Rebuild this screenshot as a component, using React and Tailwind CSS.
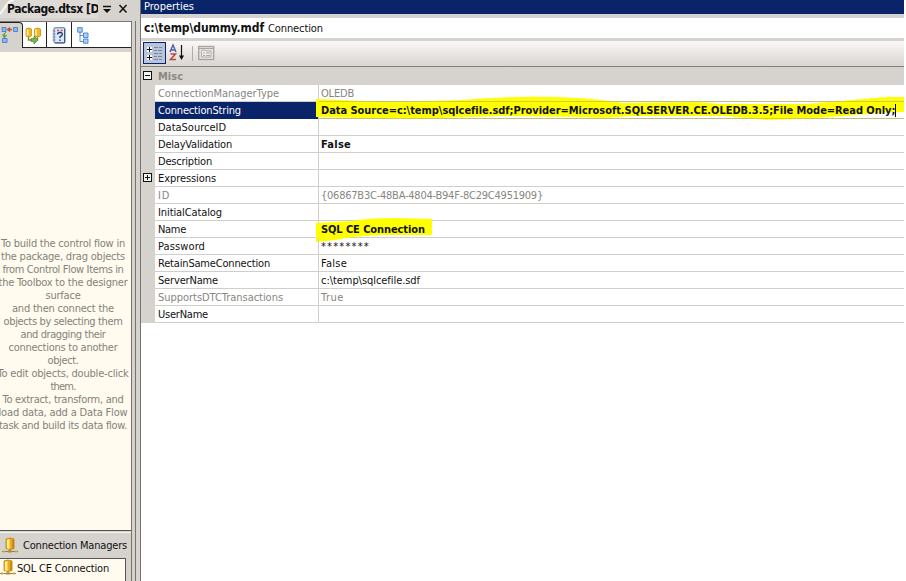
import { useLayoutEffect, useRef, useState } from "react";

// Text run that spreads its letters to fill a given width.
function Fit({ w, className = "", children }) {
  const ref = useRef(null);
  const [spacing, setSpacing] = useState(0);
  useLayoutEffect(() => {
    const natural = ref.current.getBoundingClientRect().width;
    setSpacing((w - natural) / String(children).length);
  }, []);
  return (
    <span ref={ref} className={"inline-block whitespace-pre " + className} style={{ letterSpacing: spacing + "px" }}>
      {children}
    </span>
  );
}

const rows = [
  { name: "ConnectionManagerType", nw: 121, value: "OLEDB", vw: 33, dim: true },
  { name: "ConnectionString", nw: 83, value: "Data Source=c:\\temp\\sqlcefile.sdf;Provider=Microsoft.SQLSERVER.CE.OLEDB.3.5;File Mode=Read Only;", vw: 574, bold: true, selected: true },
  { name: "DataSourceID", nw: 68 },
  { name: "DelayValidation", nw: 74, value: "False", vw: 30, bold: true },
  { name: "Description", nw: 54 },
  { name: "Expressions", nw: 58, expand: true },
  { name: "ID", nw: 12, value: "{06867B3C-48BA-4804-B94F-8C29C4951909}", vw: 222, dim: true },
  { name: "InitialCatalog", nw: 64 },
  { name: "Name", nw: 28, value: "SQL CE Connection", vw: 104, bold: true, marked: true },
  { name: "Password", nw: 47, value: "********", vw: 49 },
  { name: "RetainSameConnection", nw: 112, value: "False", vw: 26 },
  { name: "ServerName", nw: 60, value: "c:\\temp\\sqlcefile.sdf", vw: 99 },
  { name: "SupportsDTCTransactions", nw: 125, value: "True", vw: 23, dim: true },
  { name: "UserName", nw: 50 },
];

const help = [
  ["To build the control flow in", 124],
  ["the package, drag objects", 124],
  ["from Control Flow Items in", 121],
  ["the Toolbox to the designer", 129],
  ["surface", 35],
  ["and then connect the", 102],
  ["objects by selecting them", 119],
  ["and dragging their", 85],
  ["connections to another", 109],
  ["object.", 31],
  ["To edit objects, double-click", 131],
  ["them.", 25],
  ["To extract, transform, and", 121],
  ["load data, add a Data Flow", 129],
  ["task and build its data flow.", 128],
];

function Toggle({ plus }) {
  return (
    <svg width="9" height="9" viewBox="0 0 9 9" shapeRendering="crispEdges" className="block">
      <rect x=".5" y=".5" width="8" height="8" fill="#f4f3ee" stroke="#111" />
      <path d={plus ? "M2 4.5H7M4.5 2V7" : "M2 4.5H7"} stroke="#111" />
    </svg>
  );
}

function Database() {
  return (
    <svg width="18" height="17" viewBox="0 0 18 17" className="block shrink-0">
      <path d="M0 14.5H16M8 11V15" stroke="#8a8060" fill="none" />
      <path d="M1 13.500h2v2H1zM13 13.500h2v2h-2z" fill="#e0a820" />
      <path d="M4 2Q8 0 12 2V11.500Q8 13.500 4 11.500Z" fill="#f0ac18" stroke="#c08010" strokeWidth=".8" />
      <path d="M5 2.700Q6.500 2.100 7.500 2.500V12L5 11.200Z" fill="#fff0a0" />
      <path d="M11 2.500V11.500" stroke="#b06c08" />
      <path d="M6 14.5H10" stroke="#b08a28" strokeWidth="2" />
    </svg>
  );
}

function ControlFlowIcon() {
  return (
    <svg width="20" height="19" viewBox="0 0 20 19" className="block">
      <g fill="#86b8f4" stroke="#3d76bd" strokeWidth=".8">
        <path d="M2 1.5h4v4H2zM13.500 1.500h4v4h-4zM2.500 12.500h4.500v4H2.500z" />
      </g>
      <path d="M7 3.500H12M10 1.500 8 3.500 10 5.500" stroke="#c45237" strokeWidth="1.600" fill="none" />
      <path d="M6 6.500Q3.500 7.500 4.500 11M2.500 8.500 4.500 11.500 6.500 9" stroke="#559d35" strokeWidth="1.200" fill="none" />
    </svg>
  );
}

function DataFlowIcon() {
  return (
    <svg width="17" height="18" viewBox="0 0 17 18" className="block">
      <path d="M3.500 9V13H8M12.500 9V13H10" stroke="#a07b2a" strokeWidth="1.400" fill="none" />
      <path d="M1 2Q3.500 0 6.500 2V9Q3.500 11 1 9ZM9.500 2Q12.500 0 15.500 2V9Q12.500 11 9.500 9Z" fill="#f2b91f" stroke="#c58e18" strokeWidth=".8" />
      <path d="M2.500 2.500V8.500M11 2.500V8.500" stroke="#fff2a0" strokeWidth="1.600" />
      <path d="M6 11.500H9V9L13 13 9 17V14.500H6Z" fill="#76b94b" stroke="#3f8832" strokeWidth=".7" />
    </svg>
  );
}

function EventIcon() {
  return (
    <svg width="14" height="17" viewBox="0 0 14 17" className="block">
      <rect x="2" y=".8" width="11" height="15" rx="1" fill="#dce9fa" stroke="#5270a5" />
      <path d="M12.500 2V16H3" stroke="#3a558b" fill="none" />
      <path d="M.5 4h3M.5 7h3M.5 10h3M.5 13h3" stroke="#7a86a0" />
      <path d="M5 3.500h2M8.500 3.500h2" stroke="#d0483c" strokeWidth="1.500" />
      <path d="M5.500 7.500Q5.500 5.500 8 5.500T10.300 7.700Q10 9 8 9.700V11M8 12.500v1.500" stroke="#263465" strokeWidth="1.300" fill="none" />
    </svg>
  );
}

function TreeIcon() {
  return (
    <svg width="12" height="17" viewBox="0 0 12 17" className="block">
      <path d="M3 5V14.500H8M3 8.500H8" stroke="#608ac0" fill="none" />
      <path d="M.7.7h4.500v4.500H.7zM6.500 6h4.500v4.500H6.500zM6.500 12h4.500v4.200H6.500z" fill="#a9d0fa" stroke="#4280cd" strokeWidth=".9" />
    </svg>
  );
}

function Designer() {
  return (
    <div className="flex h-full w-[141px] shrink-0 bg-[#d6d3ce]">
      <div className="flex w-[131px] shrink-0 flex-col overflow-hidden">
        <div className="flex h-[21px] shrink-0 items-start">
          <div className="relative flex h-[19px] w-[98px] overflow-hidden pl-[7px] pt-px">
            <svg width="99" height="19" className="absolute left-0 top-0">
              <path d="M0 14 8 3Q10 0 14 0H98V18H0Z" fill="#dedbd6" />
              <path d="M0 14 8 3Q10 0 14 0" stroke="#f8f7f4" strokeWidth="2" fill="none" />
            </svg>
            <Fit w={92} className="relative text-[12px] font-bold leading-[16px]">Package.dtsx [D</Fit>
          </div>
          <svg width="31" height="18" viewBox="0 0 31 18" className="block">
            <path d="M5 6.500H13" stroke="#111" strokeWidth="1.500" />
            <path d="M5 9H13L9 13Z" fill="#111" />
            <path d="M21.500 5 28.500 12.500M28.500 5 21.500 12.500" stroke="#111" strokeWidth="1.500" />
          </svg>
        </div>
        <div className="flex h-[27px] shrink-0 border-b border-t border-b-[#222] border-t-[#777] bg-white">
          <div className="-mb-px flex w-[23px] rounded-tr-[4px] border-r border-t border-[#222] bg-[#d6d3ce] pt-[3px]">
            <ControlFlowIcon />
          </div>
          <div className="flex w-6 items-start justify-center border-r border-[#222] pr-[2px] pt-[5px]"><DataFlowIcon /></div>
          <div className="flex w-6 items-start justify-center pt-[5px]"><EventIcon /></div>
          <div className="flex items-start border-l border-[#222] pl-[5px] pt-[5px]"><TreeIcon /></div>
        </div>
        <div className="h-[4px] shrink-0" />
        <div className="flex h-[478px] shrink-0 flex-col items-center bg-[#fffbee] pr-[5px] pt-[185px] text-[#85827b]">
          {help.map(([text, w]) => (
            <div key={text} className="flex h-[13px] shrink-0 justify-center whitespace-pre leading-[14px]">
              <Fit w={w}>{text}</Fit>
            </div>
          ))}
        </div>
        <div className="h-px shrink-0 bg-[#555]" />
        <div className="mt-px h-px shrink-0 bg-[#f5f3ee]" />
        <div className="flex h-[25px] shrink-0 items-center pl-[2px]">
          <Database />
          <Fit w={104} className="ml-[3px]">Connection Managers</Fit>
        </div>
        <div className="mr-[5px] flex h-[23px] shrink-0 items-start border-r border-t border-[#555] bg-[#fffbee]">
          <Database />
          <Fit w={92} className="-ml-px mt-px leading-[17px]">SQL CE Connection</Fit>
        </div>
      </div>
      <div className="flex flex-1 flex-col">
        <div className="h-[21px]" />
        <div className="flex-1 border-l border-[#77746f]">
          <div className="ml-[3px] h-full border-l border-[#77746f]" />
        </div>
      </div>
      <div className="w-px bg-[#77746f]" />
    </div>
  );
}

function PropertyRow({ row }) {
  return (
    <div className="flex h-[17px]">
      <div className="w-[14px] bg-[#d6d3ce] pl-[2px] pt-[3px]">{row.expand && <Toggle plus />}</div>
      <div className={"flex w-[163px] items-start border-b pl-[3px] " + (row.selected ? "border-[#0a246a] bg-[#0a246a] text-white" : "border-[#d0cec9] " + (row.dim ? "text-[#88867f]" : ""))}>
        <Fit w={row.nw} className="leading-[18px]">{row.name}</Fit>
      </div>
      <div className={"relative flex flex-1 items-start border-b border-l border-[#d0cec9] pl-[2px] " + (row.dim ? "text-[#88867f]" : "")}>
        {row.selected && (
          <svg width="588" height="29" className="absolute -left-[3px] -top-[8px]">
            <path d="M0 5 72 8 145 6Q190 2 235 3 280 4 306 9L380 8 405 10 490 10 535 6 570 3 588 3V18L560 19Q500 25 450 26L410 22 315 22Q285 25 265 23L185 22 90 25 0 23Z" fill="#ff0" />
            <path d="M3 7.500H588M3 24.500H588" stroke="#bbb65b" opacity=".65" />
          </svg>
        )}
        {row.marked && (
          <svg width="118" height="26" className="absolute -left-[3px] -top-[3px]">
            <path d="M0 5 35 3Q52 0 80 0L116 1V17L70 17Q35 18 20 22L0 24Z" fill="#ff0" />
          </svg>
        )}
        {row.value && <Fit w={row.vw} className={"relative leading-[18px] " + (row.bold ? "font-bold" : "")}>{row.value}</Fit>}
        {row.selected && <div className="relative mt-[2px] h-[13px] w-px bg-black" />}
      </div>
    </div>
  );
}

function Properties() {
  return (
    <div className="flex w-[763px] shrink-0 flex-col bg-white">
      <div className="flex h-[14px] shrink-0 items-center bg-[#0a246a] pb-px pl-[3px] text-white"><Fit w={50} className="leading-[12px]">Properties</Fit></div>
      <div className="h-1 bg-[#d6d3ce]" />
      <div className="flex h-5 items-start pl-[3px] pt-[2px]">
        <Fit w={120} className="text-[12px] font-bold leading-[16px]">{"c:\\temp\\dummy.mdf"}</Fit>
        <Fit w={55} className="ml-1 leading-[18px]">Connection</Fit>
      </div>
      <div className="h-[3px] bg-[#d6d3ce]" />
      <div className="flex h-[26px] items-start border-b border-[#85827d] bg-gradient-to-b from-[#fcf8f8] to-[#d9d5d1] pl-[2px] pt-px">
        <div className="flex h-[22px] w-[23px] items-center justify-center border border-[#0a246a] bg-[#b8c4dc]">
          <svg width="19" height="18" viewBox="0 0 19 18" shapeRendering="crispEdges">
            <rect x="2" y="3" width="5" height="5" fill="#fff" />
            <rect x="2" y="11" width="5" height="5" fill="#fff" />
            <path d="M2 5.500H7M4.500 3V8M2 13.500H7M4.500 11V16" stroke="#111" />
            <path d="M9 3.500h4M14 3.500h3M9 6.500h3M13 6.500h4M9 9.500h4M14 9.500h3M9 12.500h3M13 12.500h4M9 15.500h4M14 15.500h3" stroke="#7b8699" />
          </svg>
        </div>
        <svg width="21" height="21" viewBox="0 0 21 21" className="block">
          <path d="M4 10 7 3 10 10M5 8H9" stroke="#4860a4" strokeWidth="1.400" fill="none" />
          <path d="M4.500 12H9.500L4.500 17.500H10" stroke="#b64a3f" strokeWidth="1.500" fill="none" />
          <path d="M15.500 3V16" stroke="#111" strokeWidth="1.200" /><path d="M13 13.500H18L15.500 18Z" fill="#111" />
        </svg>
        <div className="ml-[5px] mt-[4px] h-[15px] w-px bg-[#b0aca8]" />
        <svg width="17" height="16" viewBox="0 0 17 16" className="ml-[5px] mt-[3px] block">
          <rect x=".7" y="1.500" width="15" height="13" fill="#e6e3e0" stroke="#aaa6a1" strokeWidth="1.400" />
          <path d="M1 3.500H16" stroke="#aaa6a1" /><path d="M3.500 7V12H13V6H8L7 5H4Z" fill="#f1efec" stroke="#b1ada7" /><path d="M5 8h2M8 8h4M5 10.500h2M8 10.500h4" stroke="#a8a49f" />
        </svg>
      </div>
      <div className="flex h-[18px] shrink-0 items-start bg-[#d6d3ce] pl-[2px] pt-[4px] font-bold text-[#8b8984]">
        <Toggle /><Fit w={25} className="-mt-px ml-[6px]">Misc</Fit>
      </div>
      {rows.map((row) => <PropertyRow key={row.name} row={row} />)}
    </div>
  );
}

export default function App() {
  return (
    <div className="flex h-[581px] w-[906px] overflow-hidden bg-white font-['DejaVu_Sans_Condensed','DejaVu_Sans',sans-serif] text-[11px] leading-[14px] text-[#111]">
      <Designer />
      <Properties />
    </div>
  );
}
